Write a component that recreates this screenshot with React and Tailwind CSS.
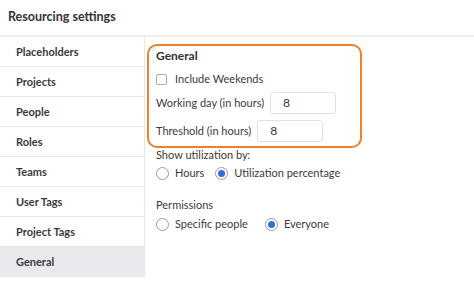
const font = { fontFamily: "Lato, 'Noto Sans', sans-serif" };

const navItems = [
  "Placeholders",
  "Projects",
  "People",
  "Roles",
  "Teams",
  "User Tags",
  "Project Tags",
  "General",
];

function Radio({ checked }) {
  return (
    <span className="w-[13px] h-[13px] rounded-full border border-[#9a9a9a] bg-white flex items-center justify-center flex-shrink-0">
      {checked && <span className="w-[7px] h-[7px] rounded-full bg-[#2f6fd8]" />}
    </span>
  );
}

function NumberInput({ value }) {
  return (
    <div className="w-[66px] h-[22px] border border-[#e2e2e2] rounded-[3px] flex items-center pl-[12px] text-[12px] text-[#333]">
      {value}
    </div>
  );
}

export default function App() {
  return (
    <div style={font} className="w-[474px] h-[287px] bg-white text-[#3b3b3b] overflow-hidden">
      {/* header */}
      <div className="h-[37px] px-[8px] flex items-center border-b-2 border-[#efefef]">
        <h1 className="text-[12.5px] font-bold text-[#333]">Resourcing settings</h1>
      </div>

      <div className="flex">
        {/* sidebar */}
        <nav className="w-[145px] border-r border-[#e6e6e6]">
          {navItems.map((item) => (
            <div
              key={item}
              className={`h-[30px] pl-[16px] pt-[1px] flex items-center text-[11px] font-bold text-[#3a3a3a] border-b border-[#e6e6e6] ${
                item === "General" ? "bg-[#e9eaee]" : "bg-white"
              }`}
            >
              {item}
            </div>
          ))}
        </nav>

        {/* main */}
        <div className="pl-[2px] pt-[7px] text-[11px]">
          <div className="w-[215px] border-2 border-[#f07f2c] rounded-[10px] pl-[7px] pt-[1px] pb-[3px]">
            <div className="h-[18px] mb-[2px] flex items-center font-bold text-[12px] text-[#333]">General</div>
            <div className="h-[24px] flex items-center gap-[8px]">
              <span className="w-[11px] h-[11px] border border-[#a9a9a9] rounded-[2px] bg-white" />
              <span>Include Weekends</span>
            </div>
            <div className="h-[24px] flex items-center gap-[6px]">
              <span>Working day (in hours)</span>
              <NumberInput value="8" />
            </div>
            <div className="mt-[4px] h-[24px] flex items-center gap-[6px]">
              <span>Threshold (in hours)</span>
              <NumberInput value="8" />
            </div>
          </div>

          <div className="pl-[9px]">
            <div className="h-[14px] flex items-center">Show utilization by:</div>
            <div className="mt-[1px] h-[20px] flex items-center">
              <Radio />
              <span className="ml-[6px]">Hours</span>
              <span className="ml-[11px]">
                <Radio checked />
              </span>
              <span className="ml-[6px]">Utilization percentage</span>
            </div>
            <div className="mt-[14px] h-[16px] flex items-center">Permissions</div>
            <div className="mt-[1px] h-[20px] flex items-center">
              <Radio />
              <span className="ml-[6px]">Specific people</span>
              <span className="ml-[17px]">
                <Radio checked />
              </span>
              <span className="ml-[6px]">Everyone</span>
            </div>
          </div>
        </div>
      </div>
    </div>
  );
}
